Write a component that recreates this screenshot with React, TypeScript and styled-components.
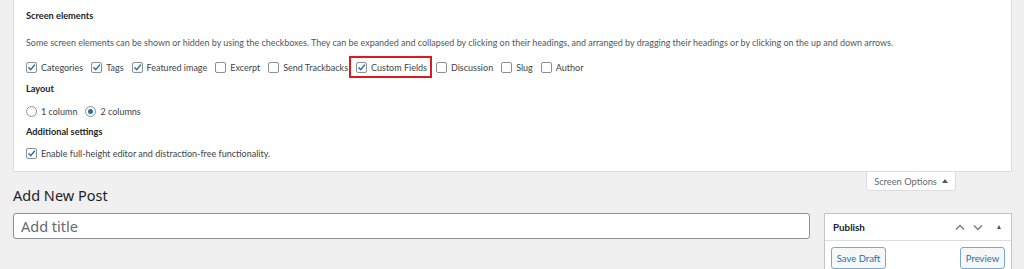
import React from "react";
import styled, { createGlobalStyle } from "styled-components";

const Global = createGlobalStyle`
  html, body { margin: 0; padding: 0; background: #f0f0f1; }
  body { font-family: Lato, "Noto Sans", sans-serif; color: #3c434a; width: 1024px; height: 269px; overflow: hidden; }
`;

const Page = styled.div`
  display: flex;
  flex-direction: column;
`;

const Panel = styled.section`
  margin: 0 12px 0 13px;
  background: #fff;
  border: 1px solid #dcdcde;
  border-top: none;
  padding: 10px 12px 7px 12px;
  display: flex;
  flex-direction: column;
`;

const Heading = styled.div<{ $mt?: number }>`
  font-size: 9.2px;
  font-weight: 700;
  color: #1d2327;
  margin-top: ${(p) => p.$mt ?? 0}px;
  line-height: 12px;
`;

const Desc = styled.p`
  font-size: 8.95px;
  color: #50575e;
  margin: 15px 0 0;
  line-height: 12px;
  white-space: nowrap;
`;

const OptRow = styled.div<{ $mt: number }>`
  display: flex;
  align-items: center;
  margin-top: ${(p) => p.$mt}px;
  height: 22px;
`;

const Opt = styled.label<{ $hl?: boolean; $gap?: number }>`
  display: flex;
  align-items: center;
  gap: 4px;
  font-size: 9px;
  color: #3c434a;
  margin-right: ${(p) => p.$gap ?? 8}px;
  box-sizing: border-box;
  height: 22px;
  ${(p) =>
    p.$hl
      ? `outline: 2px solid #e0191f; outline-offset: -2px; padding: 0 5px 0 7px; margin-left: -7px; margin-right: 4px;`
      : ``}
`;

const Box = styled.span`
  width: 11px;
  height: 11px;
  box-sizing: border-box;
  border: 1px solid #8c8f94;
  border-radius: 2px;
  background: #fff;
  display: inline-flex;
  align-items: center;
  justify-content: center;
  flex: none;
`;

const Radio = styled.span`
  width: 11px;
  height: 11px;
  box-sizing: border-box;
  border: 1px solid #8c8f94;
  border-radius: 50%;
  background: #fff;
  display: inline-flex;
  align-items: center;
  justify-content: center;
  flex: none;
`;

const Dot = styled.span`
  width: 5px;
  height: 5px;
  border-radius: 50%;
  background: #2271b1;
`;

const Check = () => (
  <svg width="9" height="9" viewBox="0 0 10 10">
    <path d="M2 5.2 L4.2 7.4 L8.4 2.2" fill="none" stroke="#2271b1" strokeWidth="1.6" strokeLinecap="round" strokeLinejoin="round" />
  </svg>
);

const CheckOpt = ({ label, checked, hl, gap }: { label: string; checked?: boolean; hl?: boolean; gap?: number }) => (
  <Opt $hl={hl} $gap={gap}>
    <Box>{checked && <Check />}</Box>
    {label}
  </Opt>
);

const MidRow = styled.div`
  display: flex;
  justify-content: space-between;
  align-items: flex-start;
  margin-left: 13px;
  margin-right: 68px;
  height: 41px;
`;

const Title = styled.h1`
  margin: 14px 0 0;
  font-family: "Noto Sans", sans-serif;
  font-size: 14.5px;
  font-weight: 400;
  color: #1d2327;
  line-height: 18px;
`;

const Tab = styled.button`
  width: 90px;
  height: 19px;
  background: #fff;
  border: 1px solid #dcdcde;
  border-top: none;
  border-radius: 0 0 3px 3px;
  font-family: inherit;
  font-size: 9.3px;
  color: #646970;
  display: flex;
  align-items: center;
  justify-content: center;
  gap: 5px;
  padding: 0;
`;

const Tri = styled.span`
  width: 0;
  height: 0;
  border-left: 3px solid transparent;
  border-right: 3px solid transparent;
  border-bottom: 4px solid #50575e;
`;

const Main = styled.div`
  display: flex;
  gap: 14px;
  margin: 0 12px 0 13px;
`;

const TitleInput = styled.div`
  flex: 1;
  height: 26px;
  box-sizing: border-box;
  border: 1px solid #8c8f94;
  border-radius: 3px;
  background: #fff;
  display: flex;
  align-items: center;
  padding-left: 7px;
  font-family: "Noto Sans", sans-serif;
  font-size: 14.5px;
  color: #646970;
`;

const Side = styled.aside`
  width: 188px;
  box-sizing: border-box;
  background: #fff;
  border: 1px solid #c3c4c7;
  height: 60px;
`;

const SideHead = styled.div`
  height: 26px;
  border-bottom: 1px solid #dcdcde;
  display: flex;
  align-items: center;
  padding: 0 8px;
  font-size: 9.8px;
  font-weight: 700;
  color: #1d2327;
`;

const HeadIcons = styled.div`
  margin-left: auto;
  display: flex;
  align-items: center;
  gap: 8px;
`;

const SmallTri = styled.span`
  width: 0;
  height: 0;
  border-left: 2.5px solid transparent;
  border-right: 2.5px solid transparent;
  border-bottom: 4px solid #50575e;
  margin-left: 6px;
  margin-right: 2px;
`;

const Chev = ({ down }: { down?: boolean }) => (
  <svg width="10" height="7" viewBox="0 0 10 7">
    <path d={down ? "M1 1.5 L5 5.5 L9 1.5" : "M1 5.5 L5 1.5 L9 5.5"} fill="none" stroke="#787c82" strokeWidth="1.4" />
  </svg>
);

const Actions = styled.div`
  display: flex;
  justify-content: space-between;
  padding: 6px 6px 0 6px;
`;

const Btn = styled.button<{ $w: number }>`
  width: ${(p) => p.$w}px;
  height: 22px;
  background: #f6f7f7;
  border: 1px solid #7aa7d0;
  border-radius: 3px;
  color: #2271b1;
  font-family: inherit;
  font-size: 9.5px;
  padding: 0;
`;

export default function App() {
  return (
    <Page>
      <Global />
      <Panel>
        <Heading $mt={0}>Screen elements</Heading>
        <Desc>
          Some screen elements can be shown or hidden by using the checkboxes. They can be expanded and collapsed by clicking on their headings, and arranged by dragging their headings or by clicking on the up and down arrows.
        </Desc>
        <OptRow $mt={7}>
          <CheckOpt label="Categories" checked />
          <CheckOpt label="Tags" checked />
          <CheckOpt label="Featured image" checked />
          <CheckOpt label="Excerpt" />
          <CheckOpt label="Send Trackbacks" />
          <CheckOpt label="Custom Fields" checked hl />
          <CheckOpt label="Discussion" />
          <CheckOpt label="Slug" />
          <CheckOpt label="Author" />
        </OptRow>
        <Heading $mt={5}>Layout</Heading>
        <OptRow $mt={5}>
          <Opt>
            <Radio />1 column
          </Opt>
          <Opt>
            <Radio>
              <Dot />
            </Radio>
            2 columns
          </Opt>
        </OptRow>
        <Heading $mt={4}>Additional settings</Heading>
        <OptRow $mt={4}>
          <CheckOpt label="Enable full-height editor and distraction-free functionality." checked />
        </OptRow>
      </Panel>
      <MidRow>
        <Title>Add New Post</Title>
        <Tab>
          Screen Options <Tri />
        </Tab>
      </MidRow>
      <Main>
        <TitleInput>Add title</TitleInput>
        <Side>
          <SideHead>
            Publish
            <HeadIcons>
              <Chev />
              <Chev down />
              <SmallTri />
            </HeadIcons>
          </SideHead>
          <Actions>
            <Btn $w={55}>Save Draft</Btn>
            <Btn $w={45}>Preview</Btn>
          </Actions>
        </Side>
      </Main>
    </Page>
  );
}
